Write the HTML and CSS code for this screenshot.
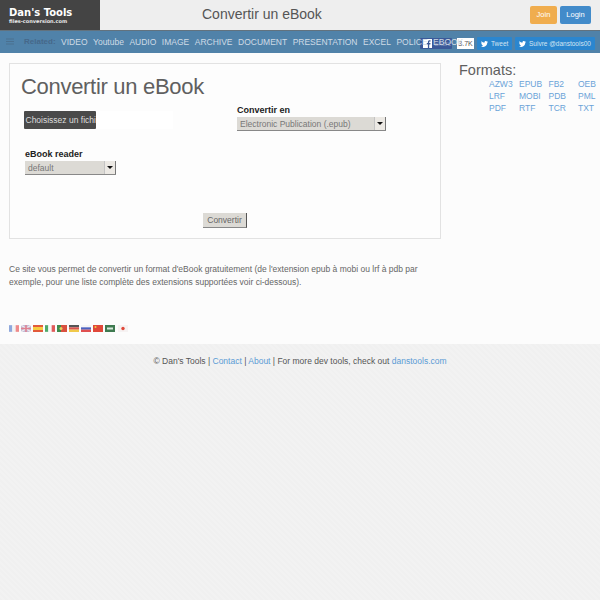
FILE: index.html
```html
<!DOCTYPE html>
<html lang="fr">
<head>
<meta charset="utf-8">
<title>Convertir un eBook</title>
<link rel="stylesheet" href="styles.css">
</head>
<body>
<header class="top">
  <div class="logo"><span class="logo-name">Dan's Tools</span><span class="logo-sub">files-conversion.com</span></div>
  <div class="title">Convertir un eBook</div>
  <div class="auth"><a class="btn join">Join</a><a class="btn login">Login</a></div>
</header>
<nav class="nav">
  <svg class="burger" width="8" height="7" viewBox="0 0 8 7"><path d="M0 1h8M0 3.500h8M0 6h8" stroke="#4a7090" stroke-width="1.200"/></svg>
  <span class="related">Related:</span>
  <a>VIDEO</a><a>Youtube</a><a>AUDIO</a><a>IMAGE</a><a>ARCHIVE</a><a>DOCUMENT</a><a>PRESENTATION</a><a>EXCEL</a><a>POLICE</a><a>EBOOK</a>
  <div class="social">
    <span class="fb"><svg width="9" height="9" viewBox="0 0 9 9"><rect width="9" height="9" fill="#fff"/><path d="M6.200 9V5.500h1.100l.2-1.400H6.200v-.8c0-.4.1-.7.700-.7h.7V1.400C7.400 1.400 7 1.300 6.600 1.300 5.600 1.300 4.900 1.900 4.900 3.100v1H3.800v1.400h1.100V9z" fill="#3b5998"/></svg>Share</span>
    <span class="count">3.7K</span>
    <span class="tw tweet"><svg class="bird" width="7" height="6" viewBox="0 0 24 20"><path d="M24 2.400c-.9.400-1.800.7-2.800.8 1-.6 1.800-1.600 2.200-2.700-1 .6-2 1-3.100 1.200C19.300.7 18 0 16.600 0c-2.700 0-4.900 2.200-4.900 4.900 0 .4 0 .8.100 1.100C7.700 5.800 4.100 3.900 1.700.9 1.200 1.600 1 2.500 1 3.400c0 1.700.9 3.200 2.200 4.100-.8 0-1.600-.2-2.200-.6v.1c0 2.400 1.700 4.400 3.900 4.800-.7.200-1.500.2-2.200.1.600 2 2.400 3.400 4.600 3.400-1.700 1.300-3.800 2.100-6.100 2.100-.4 0-.8 0-1.200-.1C2.200 19.200 4.800 20 7.500 20c9.100 0 14-7.500 14-14v-.6c1-.7 1.800-1.600 2.500-3z" fill="#fff"/></svg>Tweet</span>
    <span class="tw follow"><svg class="bird" width="7" height="6" viewBox="0 0 24 20"><path d="M24 2.400c-.9.400-1.800.7-2.800.8 1-.6 1.800-1.600 2.200-2.700-1 .6-2 1-3.100 1.200C19.300.7 18 0 16.600 0c-2.700 0-4.900 2.200-4.900 4.900 0 .4 0 .8.100 1.100C7.700 5.800 4.100 3.900 1.700.9 1.200 1.600 1 2.500 1 3.400c0 1.700.9 3.200 2.200 4.100-.8 0-1.600-.2-2.200-.6v.1c0 2.400 1.700 4.400 3.900 4.800-.7.200-1.500.2-2.200.1.600 2 2.400 3.400 4.600 3.400-1.700 1.300-3.800 2.100-6.100 2.100-.4 0-.8 0-1.200-.1C2.200 19.200 4.800 20 7.500 20c9.100 0 14-7.500 14-14v-.6c1-.7 1.800-1.600 2.500-3z" fill="#fff"/></svg>Suivre @danstools00</span>
  </div>
</nav>
<main class="main">
  <div class="columns">
    <section class="panel">
      <h1>Convertir un eBook</h1>
      <div class="form-grid">
        <div class="col-left">
          <div class="file"><span class="file-btn">Choisissez un fichi</span></div>
          <label class="lbl lbl-reader">eBook reader</label>
          <div class="select select-short"><span class="select-text">default</span><span class="arrow"></span></div>
        </div>
        <div class="col-right">
          <label class="lbl">Convertir en</label>
          <div class="select select-long"><span class="select-text">Electronic Publication (.epub)</span><span class="arrow"></span></div>
        </div>
      </div>
      <div class="submit-row"><span class="submit">Convertir</span></div>
    </section>
    <aside class="formats">
      <h2>Formats:</h2>
      <div class="format-grid">
        <a>AZW3</a><a>EPUB</a><a>FB2</a><a>OEB</a>
        <a>LRF</a><a>MOBI</a><a>PDB</a><a>PML</a>
        <a>PDF</a><a>RTF</a><a>TCR</a><a>TXT</a>
      </div>
    </aside>
  </div>
  <p class="desc">Ce site vous permet de convertir un format d'eBook gratuitement (de l'extension epub à mobi ou lrf à pdb par exemple, pour une liste complète des extensions supportées voir ci-dessous).</p>
  <div class="flags">
    <svg width="10" height="7" viewBox="0 0 3 2"><rect width="1" height="2" fill="#8fa8dc"/><rect x="1" width="1" height="2" fill="#f4f4f4"/><rect x="2" width="1" height="2" fill="#ee8a8a"/></svg>
    <svg width="10" height="7" viewBox="0 0 10 7"><rect width="10" height="7" fill="#c4bdd8"/><path d="M0 0l10 7M10 0L0 7" stroke="#eee" stroke-width="1.200"/><path d="M5 0v7M0 3.500h10" stroke="#e08090" stroke-width="1.500"/></svg>
    <svg width="10" height="7" viewBox="0 0 10 7"><rect width="10" height="7" fill="#e25a3a"/><rect y="2" width="10" height="3" fill="#f7cb40"/></svg>
    <svg width="10" height="7" viewBox="0 0 3 2"><rect width="1" height="2" fill="#4fa96a"/><rect x="1" width="1" height="2" fill="#f7f7f7"/><rect x="2" width="1" height="2" fill="#e05a5a"/></svg>
    <svg width="10" height="7" viewBox="0 0 10 7"><rect width="10" height="7" fill="#d9503f"/><rect width="4" height="7" fill="#3f8b4d"/><circle cx="4" cy="3.500" r="1.500" fill="#e8cf60"/></svg>
    <svg width="10" height="7" viewBox="0 0 3 3" preserveAspectRatio="none"><rect width="3" height="1" fill="#555"/><rect y="1" width="3" height="1" fill="#d9534f"/><rect y="2" width="3" height="1" fill="#f0c94a"/></svg>
    <svg width="10" height="7" viewBox="0 0 3 3" preserveAspectRatio="none"><rect width="3" height="1" fill="#f5f5f5"/><rect y="1" width="3" height="1" fill="#4b62c0"/><rect y="2" width="3" height="1" fill="#e05050"/></svg>
    <svg width="10" height="7" viewBox="0 0 10 7"><rect width="10" height="7" fill="#e0483a"/><circle cx="2.500" cy="2" r="1" fill="#f2d040"/></svg>
    <svg width="10" height="7" viewBox="0 0 10 7"><rect width="10" height="7" fill="#3f7a50"/><rect x="2" y="2.500" width="6" height="2" fill="#d8e8dc"/></svg>
    <svg class="flag-jp" width="10" height="7" viewBox="0 0 10 7"><rect width="10" height="7" fill="#f6f2f2"/><circle cx="5" cy="3.500" r="1.700" fill="#e0483a"/></svg>
  </div>
</main>
<footer class="footer">© Dan's Tools | <a>Contact</a> | <a>About</a> | For more dev tools, check out <a>danstools.com</a></footer>
</body>
</html>
```
FILE: styles.css
```css
* { box-sizing: border-box; }
html, body { margin: 0; height: 100%; }
body { font-family: "Liberation Sans", Arial, sans-serif; background: #fcfcfc; color: #555; font-size: 9px; overflow: hidden; display: flex; flex-direction: column; height: 600px; }
.top { height: 30px; background: #eeeeee; display: flex; align-items: center; position: relative; }
.logo { width: 100px; height: 30px; background: #444; color: #fff; display: flex; flex-direction: column; padding: 7px 0 0 9px; font-family: "DejaVu Sans", sans-serif; }
.logo-name { font-size: 10px; font-weight: 700; line-height: 11px; }
.logo-sub { font-size: 5px; font-weight: 700; line-height: 7px; color: #e8e8e8; }
.title { flex: 1; padding: 0 0 3px 102px; font-size: 14px; color: #555; white-space: nowrap; }
.auth { display: flex; gap: 3px; margin-right: 9px; }
.btn { height: 18px; border-radius: 2px; color: #fff; font-size: 7.500px; line-height: 18px; text-align: center; }
.join { width: 27px; background: #f0ad4e; }
.login { width: 31px; background: #428bca; }
.nav { height: 23px; background: #5082a9; box-shadow: inset 0 1px 0 #62727e; display: flex; align-items: center; gap: 5.500px; padding-left: 6px; white-space: nowrap; position: relative; }
.nav a { color: #cfdbe6; font-size: 8.500px; position: relative; z-index: 1; }
.burger { margin-right: 4.500px; }
.related { color: #46688a; font-size: 8px; font-weight: 700; }
.social { position: absolute; left: 420px; top: 7px; display: flex; align-items: center; height: 13px; }
.fb { width: 32px; height: 11px; background: #3b5998; color: #7e92bb; font-size: 6.500px; display: flex; align-items: center; gap: 2px; padding-left: 3px; border-radius: 1px; }
.count { width: 17px; height: 11px; margin-left: 5px; background: #fff; color: #555; font-size: 7px; text-align: center; line-height: 11px; }
.tw { height: 13px; background: #2b86cf; color: #d5e5f2; display: flex; align-items: center; gap: 3px; font-size: 6.500px; border-radius: 1px; }
.tweet { width: 35px; margin-left: 3px; padding-left: 4px; }
.follow { width: 80px; margin-left: 3px; padding-left: 4px; font-size: 6.500px; }
.main { height: 291px; padding: 10px 9px 0; }
.columns { display: flex; }
.panel { flex: 0 0 432px; height: 176px; border: 1px solid #e2e2e2; background: #fdfdfd; padding: 10px 15px 0 11px; display: flex; flex-direction: column; }
h1 { margin: 0; font-size: 22px; letter-spacing: -0.3px; line-height: 26px; font-weight: 400; color: #606060; }
.form-grid { display: flex; margin-top: 5px; }
.col-left { width: 216px; padding: 6px 0 0 4px; }
.file { width: 149px; height: 18px; background: #fff; margin-left: -1px; }
.file-btn { display: block; width: 72px; height: 18px; background: #4a4a4a; color: #ddd; font-size: 8.500px; line-height: 18px; white-space: nowrap; overflow: hidden; padding-left: 1.500px; border-radius: 1px; }
.lbl { display: block; font-size: 9px; font-weight: 700; color: #222; line-height: 11px; }
.lbl-reader { margin-top: 20px; }
.select { height: 14px; background: #dcdad5; display: flex; justify-content: space-between; align-items: center; border-bottom: 1px solid #888; color: #777; margin-top: 1px; }
.select-short { width: 91px; }
.select-long { width: 149px; }
.select-text { padding-left: 3px; font-size: 8.500px; white-space: nowrap; }
.arrow { width: 12px; height: 13px; background: #ece9e4; border-right: 1px solid #777; border-left: 1px solid #c4c4c4; position: relative; }
.arrow::after { content: ""; position: absolute; left: 2px; top: 5px; border: 3px solid transparent; border-top: 3px solid #111; }
.submit-row { margin-top: auto; margin-bottom: 10px; padding-left: 182px; }
.submit { display: block; width: 44px; height: 15px; background: #dcdad5; color: #666; font-size: 8.500px; line-height: 14px; text-align: center; border-right: 1px solid #555; border-bottom: 1px solid #888; }
.formats { padding-left: 18px; flex: 1; }
h2 { margin: -1px 0 0; font-size: 14.500px; line-height: 16px; font-weight: 400; color: #606060; }
.format-grid { display: grid; grid-template-columns: 30px 29.500px 29.500px 20px; margin-left: 30px; }
.format-grid a { font-size: 8.500px; line-height: 12px; color: #6aa3d8; }
.desc { margin: 24px 0 0; width: 416px; font-size: 8.500px; line-height: 13px; color: #666; }
.flags { display: flex; gap: 2px; margin-top: 36px; }
.flag-jp { margin-left: 1px; }
.footer { flex: 1; background: repeating-linear-gradient(45deg, #f0f0f0 0 2px, #f2f2f2 2px 4px); padding-top: 11px; text-align: center; font-size: 8.500px; line-height: 12px; color: #555; }
.footer a { color: #5a9bd5; }
```
